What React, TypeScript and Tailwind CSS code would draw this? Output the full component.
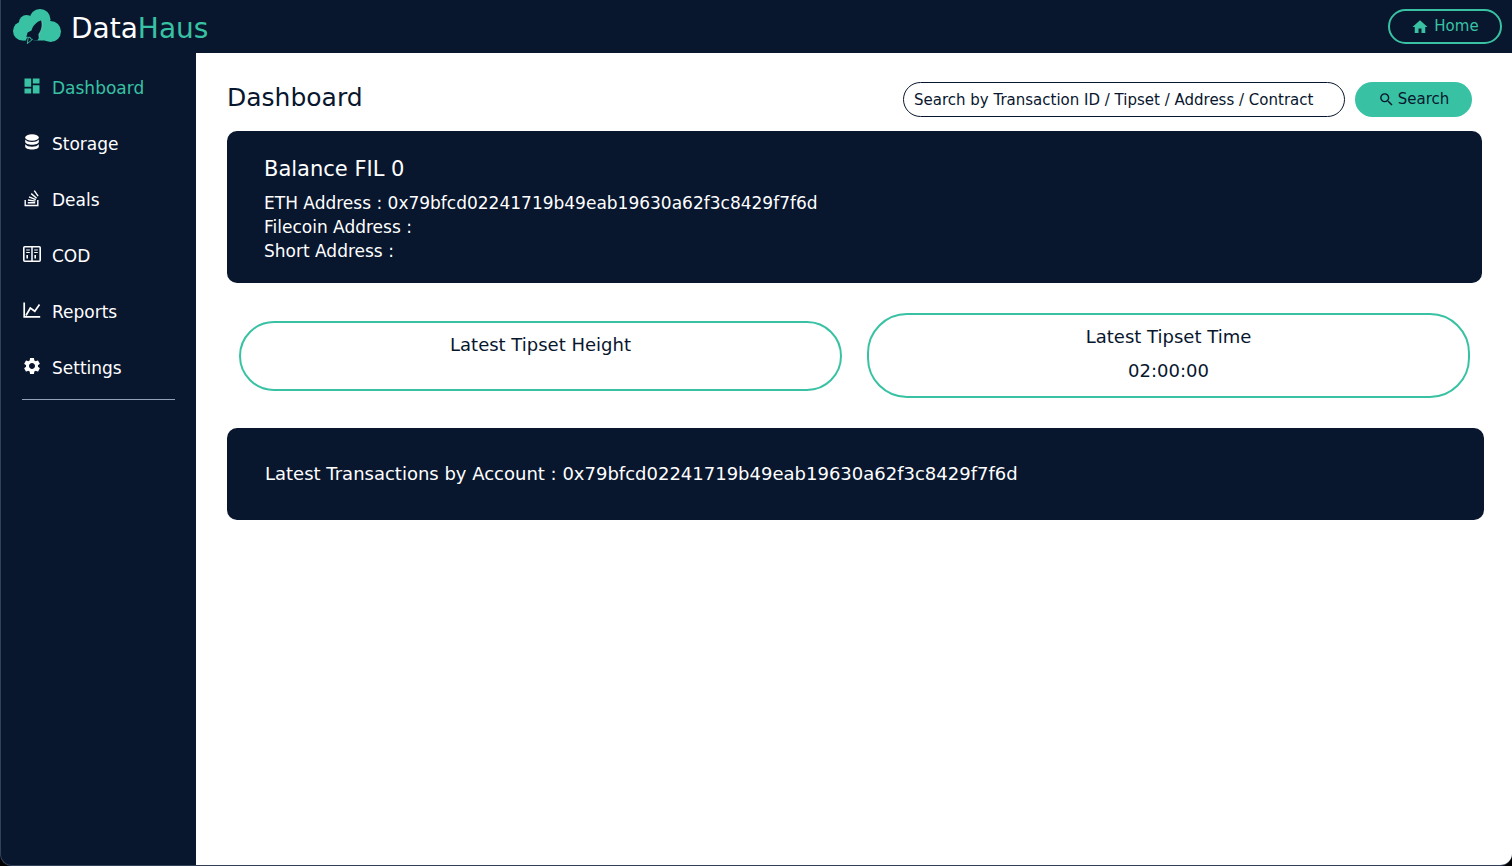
import type { ReactNode } from 'react';
import { MdDashboard, MdHome, MdSearch, MdSettings } from 'react-icons/md';

const account = '0x79bfcd02241719b49eab19630a62f3c8429f7f6d';

const CloudLogo = () => (
  <svg viewBox="0 0 48 36" className="h-9 w-12" aria-hidden="true">
    <g fill="#38c2a3">
      <circle cx="9.5" cy="22" r="9.5" />
      <circle cx="13.5" cy="13.5" r="7.5" />
      <circle cx="27" cy="10.5" r="10.5" />
      <circle cx="37.5" cy="22.5" r="10.5" />
      <path d="M9 14h28v17.500H10z" />
    </g>
    <path
      d="M28.400 11.200c-5 1.600-8.600 5.400-9.900 10.300l-3.900 2-1.300 4.500 2.200-.6-2.300 2.600V36h5l2.600-4.500h3.400l1.800-2.800-.2-3.600c3-4 4-9 2.600-13.900z"
      fill="#08162e"
    />
    <path d="M28.400 11.200c1.400 4.900.4 9.900-2.600 13.900l.2 3.600" fill="none" stroke="#9adccd" strokeWidth=".5" />
    <path d="M15.200 28.600l-.9 6 5.200-4.200-1.600-.3-.8-1.900z" fill="none" stroke="#38c2a3" strokeWidth=".9" />
  </svg>
);

const DiscsIcon = () => (
  <svg viewBox="0 0 16 18" className="h-[18px] w-4" fill="currentColor" aria-hidden="true">
    <ellipse cx="8" cy="4.500" rx="6.800" ry="3.200" />
    <path d="M1.200 6.600c1.200 1.700 3.800 2.500 6.800 2.500s5.600-.8 6.800-2.500v2.200c0 1.800-3 3-6.800 3s-6.800-1.200-6.800-3z" />
    <path d="M1.200 11.200c1.200 1.700 3.800 2.500 6.800 2.500s5.600-.8 6.800-2.500v2.200c0 1.800-3 3-6.800 3s-6.800-1.200-6.800-3z" />
  </svg>
);

const StackIcon = () => (
  <svg viewBox="0 0 16 18" className="h-[18px] w-4" fill="none" stroke="currentColor" strokeWidth="1.400" aria-hidden="true">
    <path d="M1.200 11v5.500h12.600V11" />
    <path d="M3.800 13.800h7.400M4 11l7.400 1.100M5 7.800l6.800 2.900M7.200 4.600l5.400 4.600M10.300 1.600l3.800 5.600" />
  </svg>
);

const CabinetIcon = () => (
  <svg viewBox="0 0 20 18" className="h-[18px] w-5" fill="none" stroke="currentColor" aria-hidden="true">
    <rect x="1.800" y="1.800" width="16.400" height="14.400" rx="1" strokeWidth="1.600" />
    <path d="M10 1.800v14.400" strokeWidth="1.500" />
    <path d="M4.200 5h3.600M4.200 7.500h3.600M12.200 5h3.600M12.200 7.500h3.600" strokeWidth="1.200" />
    <path d="M5.200 10v3.500M13.200 10v3.500" strokeWidth="1.600" />
  </svg>
);

const ChartIcon = () => (
  <svg viewBox="0 0 18 18" className="size-[18px]" fill="none" stroke="currentColor" strokeWidth="1.700" aria-hidden="true">
    <path d="M1.200 1.500v14.300h16" />
    <path d="M3 14.500l4.300-7.500 4.500 3.200 4.700-6.700" />
  </svg>
);

const navItems: { name: string; icon: ReactNode; active?: boolean }[] = [
  { name: 'Dashboard', icon: <MdDashboard size={20} />, active: true },
  { name: 'Storage', icon: <DiscsIcon /> },
  { name: 'Deals', icon: <StackIcon /> },
  { name: 'COD', icon: <CabinetIcon /> },
  { name: 'Reports', icon: <ChartIcon /> },
  { name: 'Settings', icon: <MdSettings size={20} /> },
];

const Header = () => (
  <header className="flex h-[53px] items-center justify-between pl-3 pr-[10px]">
    <a href="#" className="flex items-center gap-[10px] text-[28px] leading-9 text-white">
      <CloudLogo />
      <span className="pt-1">
        Data<span className="text-[#38c2a3]">Haus</span>
      </span>
    </a>
    <button
      type="button"
      className="flex h-[35px] w-[114px] items-center justify-center gap-[5px] rounded-full border-2 border-[#38c2a3] text-[15px] text-[#38c2a3]"
    >
      <MdHome size={18} />
      Home
    </button>
  </header>
);

const Sidebar = () => (
  <aside className="w-[195px] shrink-0 px-[21px] pt-4">
    <nav className="flex flex-col gap-4 border-b border-slate-400 pb-[10px]">
      {navItems.map((item) => (
        <a
          key={item.name}
          href="#"
          className={`flex h-10 items-center gap-[10px] text-[17px] ${item.active ? 'text-[#38c2a3]' : 'text-white'}`}
        >
          <span className="flex w-5 justify-center pb-[6px]">{item.icon}</span>
          {item.name}
        </a>
      ))}
    </nav>
  </aside>
);

const SearchForm = () => (
  <form className="flex gap-[10px] pr-[10px]" onSubmit={(e) => e.preventDefault()}>
    <input
      type="text"
      aria-label="Search"
      placeholder="Search by Transaction ID / Tipset / Address / Contract"
      className="h-[35px] w-[442px] rounded-full border border-[#08162e] px-[10px] text-[15px] placeholder:text-[#08162e]"
    />
    <button
      type="submit"
      className="flex h-[35px] w-[117px] items-center justify-center gap-[3px] rounded-full bg-[#38c2a3] text-[15px]"
    >
      <MdSearch size={17} />
      Search
    </button>
  </form>
);

const App = () => {
  return (
    <div className="flex min-h-screen flex-col bg-black font-['DejaVu_Sans',sans-serif] text-[#08162e]">
      <div className="flex flex-1 flex-col overflow-hidden rounded-b-xl border-b border-l border-slate-700 bg-[#08162e]">
        <Header />
        <div className="flex flex-1">
          <Sidebar />
          <main className="min-w-0 flex-1 bg-white pl-[31px] pr-[30px] pt-[29px]">
            <div className="flex items-start justify-between">
              <h1 className="text-[25px] leading-8">Dashboard</h1>
              <SearchForm />
            </div>

            <section className="mt-[14px] rounded-[10px] bg-[#08162e] px-[37px] pb-5 pt-[22px] text-white">
              <h2 className="mb-[6px] text-[21px] leading-8">Balance FIL 0</h2>
              <div className="text-[17px] leading-6">
                <p>ETH Address : {account}</p>
                <p>Filecoin Address :</p>
                <p>Short Address :</p>
              </div>
            </section>

            <div className="my-[30px] flex items-center gap-[25px] px-3 text-center text-[18px] leading-6">
              <div className="h-[70px] flex-1 rounded-[40px] border-2 border-[#38c2a3] pt-[10px]">
                <p>Latest Tipset Height</p>
              </div>
              <div className="h-[85px] flex-1 rounded-[40px] border-2 border-[#38c2a3] pt-[10px]">
                <p>Latest Tipset Time</p>
                <p className="mt-[10px]">02:00:00</p>
              </div>
            </div>

            <section className="-mr-0.5 rounded-[10px] bg-[#08162e] px-[38px] py-[34px] text-[18px] leading-6 text-white">
              Latest Transactions by Account : {account}
            </section>
          </main>
        </div>
      </div>
    </div>
  );
};

export default App;
